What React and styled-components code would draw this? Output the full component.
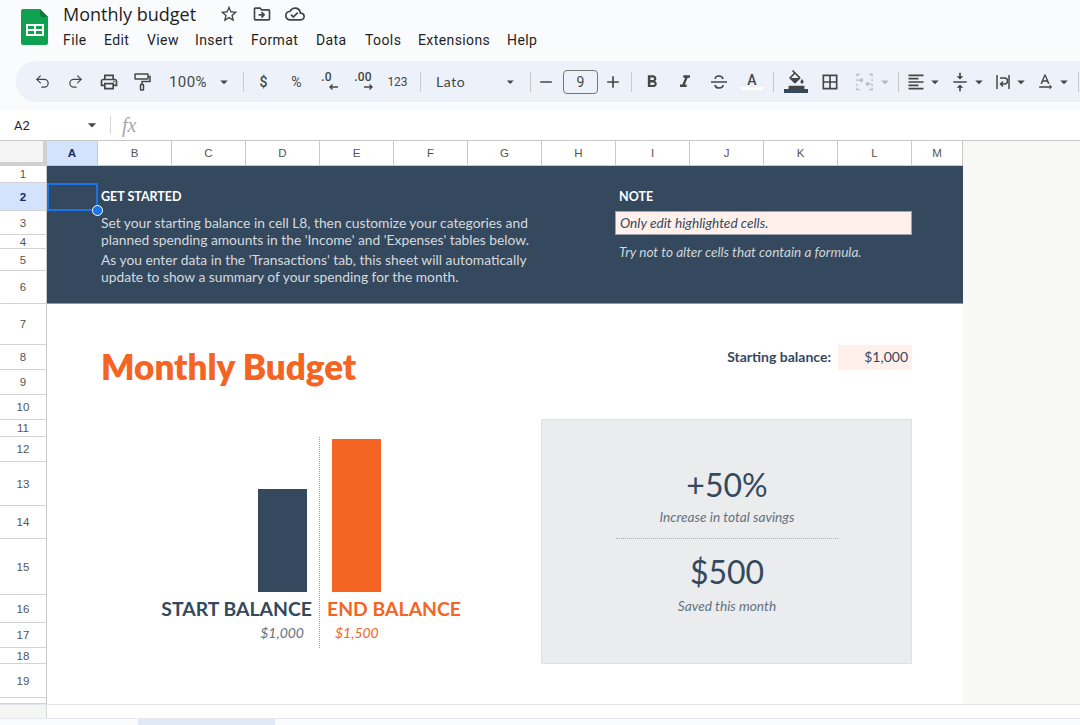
import React from "react";
import styled, { createGlobalStyle, css } from "styled-components";
import { Undo2, Redo2 } from "lucide-react";
import {
  MdStarBorder,
  MdOutlineDriveFileMove,
  MdOutlineCloudDone,
  MdOutlinePrint,
  MdArrowDropDown,
  MdAdd,
  MdRemove,
  MdFormatBold,
  MdFormatItalic,
  MdFormatColorFill,
  MdBorderAll,
  MdFormatAlignLeft,
  MdVerticalAlignCenter,
  MdTextRotationNone,
} from "react-icons/md";

const NAVY = "#34495e";
const ORANGE = "#f46524";
const PEACH = "#fff0eb";

const columns = ["A", "B", "C", "D", "E", "F", "G", "H", "I", "J", "K", "L", "M"];
const rowHeights = [17, 28, 24, 14, 22, 33, 41, 25, 25, 25, 17, 25, 44, 33, 56, 28, 25, 16, 34, 6];

const GlobalStyle = createGlobalStyle`
  html, body {
    margin: 0;
    padding: 0;
    height: 100%;
    overflow: hidden;
    background: #f9fbfd;
  }
`;

const Page = styled.div`
  width: 1080px;
  height: 725px;
  display: flex;
  flex-direction: column;
  overflow: hidden;
  background: #f9fbfd;
  font-family: Roboto, "Liberation Sans", sans-serif;
  color: #1f1f1f;
`;

const TitleBar = styled.header`
  height: 61px;
  display: flex;
  padding-left: 21px;
  gap: 15px;
  flex: none;
`;

const Logo = styled.svg`
  width: 27px;
  height: 36px;
  margin-top: 9px;
`;

const TitleBlock = styled.div`
  display: flex;
  flex-direction: column;
`;

const TitleRow = styled.div`
  display: flex;
  align-items: center;
  height: 28px;
  color: #444746;
`;

const DocName = styled.span`
  font-family: "Open Sans", sans-serif;
  font-size: 18px;
  color: #1f1f1f;
  width: 149px;
`;

const TitleIcon = styled.span`
  width: 33px;
  display: flex;
  justify-content: center;
  align-items: center;
  font-size: 20px;
`;

const MenuRow = styled.nav`
  display: flex;
  margin-top: 2px;
`;

const MenuItem = styled.span`
  font-size: 14px;
  letter-spacing: 0.4px;
  line-height: 20px;
  width: ${(p) => p.$w}px;
`;

const Toolbar = styled.div`
  height: 41px;
  margin-left: 16px;
  flex: none;
  display: flex;
  align-items: center;
  padding-left: 10px;
  background: #edf2fa;
  border-radius: 20px 0 0 20px;
  color: #444746;
  overflow: hidden;
`;

const ToolButton = styled.span`
  flex: none;
  width: ${(p) => p.$w || 33}px;
  height: 28px;
  display: flex;
  align-items: center;
  justify-content: ${(p) => p.$align || "center"};
  padding-left: ${(p) => p.$pad || 0}px;
  box-sizing: border-box;
  font-size: ${(p) => p.$size || 20}px;
  color: ${(p) => (p.$muted ? "#b5b8bb" : "#444746")};
`;

const ToolText = styled.span`
  font-size: ${(p) => p.$size || 14}px;
  font-weight: ${(p) => p.$weight || 400};
  font-family: ${(p) => (p.$lato ? "Lato, sans-serif" : "Roboto, sans-serif")};
  margin-right: ${(p) => p.$gap || 0}px;
  letter-spacing: ${(p) => p.$track || 0}px;
  white-space: nowrap;
`;

const Divider = styled.span`
  flex: none;
  width: 1px;
  height: 20px;
  background: #c7c9cc;
  margin-left: ${(p) => p.$before}px;
  margin-right: ${(p) => p.$after}px;
`;

const FontSizeBox = styled.span`
  flex: none;
  width: 35px;
  height: 24px;
  margin-left: 2px;
  box-sizing: border-box;
  border: 1px solid #747775;
  border-radius: 4px;
  display: flex;
  align-items: center;
  justify-content: center;
  font-size: 14px;
  color: #444746;
`;

const Stacked = styled.span`
  display: flex;
  flex-direction: column;
  align-items: center;
  line-height: 1;
`;

const ColorBar = styled.span`
  width: ${(p) => p.$w}px;
  height: ${(p) => p.$h}px;
  background: ${(p) => p.$color};
`;

const DecimalText = styled.span`
  font-size: 12px;
  font-weight: 500;
  line-height: 11px;
  letter-spacing: 0.2px;
  margin-right: ${(p) => p.$shift || 0}px;
`;

const CaretGap = styled.span`
  display: flex;
  margin-left: 2px;
`;

const FormulaBar = styled.div`
  margin-top: 8px;
  height: 30px;
  flex: none;
  display: flex;
  align-items: center;
  background: #fff;
  border-bottom: 1px solid #c7c7c7;
`;

const NameBox = styled.span`
  width: 68px;
  padding-left: 14px;
  font-size: 13px;
  color: #1f1f1f;
`;

const NameCaret = styled.span`
  width: 28px;
  display: flex;
  color: #444746;
  font-size: 20px;
`;

const FormulaDivider = styled.span`
  width: 1px;
  height: 18px;
  background: #d5d7da;
  margin-right: 11px;
`;

const FxLabel = styled.i`
  font-family: "Liberation Serif", serif;
  font-size: 20px;
  color: #a4a7aa;
`;

const Sheet = styled.div`
  flex: none;
  display: grid;
  grid-template-columns: 47px 51px repeat(11, 74px) 51px 117px;
  grid-template-rows: 25px ${rowHeights.map((h) => `${h}px`).join(" ")};
  background: #f8f9f7;
`;

const placed = css`
  grid-column: ${(p) => p.$col};
  grid-row: ${(p) => p.$row};
`;

const Corner = styled.div`
  grid-column: 1;
  grid-row: 1;
  box-sizing: border-box;
  background: #f5f5f5;
  border-right: 4px solid #cfd1d3;
  border-bottom: 4px solid #cfd1d3;
`;

const headCell = css`
  ${placed}
  box-sizing: border-box;
  display: flex;
  align-items: center;
  justify-content: center;
  font-family: "Liberation Sans", sans-serif;
  font-size: 11.5px;
  border-right: 1px solid #c7c7c7;
  background: ${(p) => (p.$active ? "#d3e3fd" : "#fff")};
  color: ${(p) => (p.$active ? "#0b2a6b" : "#555")};
  font-weight: ${(p) => (p.$active ? 700 : 400)};
`;

const ColumnHead = styled.div`
  ${headCell}
  border-bottom: 1px solid #c7c7c7;
`;

const RowHead = styled.div`
  ${headCell}
  border-bottom: 1px solid #d2d3d5;
`;

const Banner = styled.div`
  grid-column: 2 / 15;
  grid-row: 2 / 8;
  background: ${NAVY};
  border-bottom: 1px solid #8b98a6;
`;

const Canvas = styled.div`
  grid-column: 2 / 15;
  grid-row: 8 / 22;
  background: #fff;
`;

const Selection = styled.div`
  ${placed}
  position: relative;
  box-sizing: border-box;
  border: 2px solid #1a73e8;
`;

const FillHandle = styled.span`
  position: absolute;
  right: -7px;
  bottom: -7px;
  width: 9px;
  height: 9px;
  border-radius: 50%;
  background: #1a73e8;
  border: 1.5px solid #fff;
`;

const Cell = styled.div`
  ${placed}
  font-family: Lato, sans-serif;
  display: flex;
  align-items: center;
  white-space: nowrap;
`;

const BannerHeading = styled(Cell)`
  padding-left: 3px;
  padding-bottom: 2px;
  font-size: 12.5px;
  font-weight: 700;
  color: #fff;
`;

const BannerText = styled(Cell)`
  padding-left: 3px;
  display: block;
  align-self: ${(p) => p.$align || "center"};
  padding-top: ${(p) => p.$top || 0}px;
  font-size: 13.8px;
  line-height: 17px;
  color: #d6dadf;
`;

const NoteBox = styled(Cell)`
  box-sizing: border-box;
  margin-left: -1px;
  padding-left: 4px;
  padding-bottom: 2px;
  background: ${PEACH};
  border: 1px solid #9aa5b1;
  font-size: 13.7px;
  font-style: italic;
  color: ${NAVY};
`;

const NoteHint = styled(Cell)`
  padding-left: 3px;
  padding-bottom: 2px;
  font-size: 13.6px;
  font-style: italic;
  color: #d0d5da;
`;

const BudgetTitle = styled(Cell)`
  padding-left: 3px;
  padding-bottom: 9px;
  font-size: 35px;
  font-weight: 800;
  color: ${ORANGE};
`;

const BalanceLabel = styled(Cell)`
  justify-content: flex-end;
  padding-right: 7px;
  padding-bottom: 2px;
  font-size: 14px;
  font-weight: 700;
  color: ${NAVY};
`;

const BalanceValue = styled(Cell)`
  justify-content: flex-end;
  padding-right: 4px;
  padding-bottom: 2px;
  background: ${PEACH};
  font-size: 14px;
  color: ${NAVY};
`;

const Bar = styled.div`
  ${placed}
  align-self: end;
  width: 49px;
  height: ${(p) => p.$h}px;
  margin-bottom: 3px;
  background: ${(p) => p.$color};
  justify-self: ${(p) => (p.$left ? "end" : "start")};
  margin-right: ${(p) => (p.$left ? 13 : 0)}px;
  margin-left: ${(p) => (p.$left ? 0 : 12)}px;
`;

const CenterRule = styled.div`
  grid-column: 6;
  grid-row: 13 / 19;
  border-left: 1px dotted #9b9b9b;
  margin-left: -1px;
`;

const ChartLabel = styled(Cell)`
  justify-self: ${(p) => (p.$left ? "end" : "start")};
  margin-right: ${(p) => (p.$left ? 8 : 0)}px;
  margin-left: ${(p) => (p.$left ? 0 : 7)}px;
  padding-bottom: 2px;
  font-size: 19.4px;
  font-weight: 700;
  color: ${(p) => p.$color};
`;

const ChartValue = styled(Cell)`
  justify-self: ${(p) => (p.$left ? "end" : "start")};
  margin-right: ${(p) => (p.$left ? 16 : 0)}px;
  margin-left: ${(p) => (p.$left ? 0 : 15)}px;
  padding-bottom: 6px;
  font-size: 14px;
  font-style: italic;
  color: ${(p) => p.$color};
`;

const SavingsCard = styled.div`
  grid-column: 9 / 14;
  grid-row: 12 / 20;
  margin-top: -1px;
  margin-left: -1px;
  box-sizing: border-box;
  background: #ebecee;
  border: 1px solid #dfe1e3;
`;

const BigStat = styled(Cell)`
  justify-content: center;
  padding-top: ${(p) => p.$top || 0}px;
  font-size: 32px;
  color: ${NAVY};
`;

const StatCaption = styled(Cell)`
  justify-content: center;
  padding-bottom: ${(p) => p.$bottom || 0}px;
  font-size: 13.7px;
  font-style: italic;
  color: #65727f;
`;

const StatRule = styled.div`
  grid-column: 10 / 13;
  grid-row: 16;
  align-self: start;
  margin-top: -1px;
  border-top: 1px dotted #a9adb1;
`;

const SheetFoot = styled.div`
  height: 13px;
  flex: none;
  display: flex;
  background: #fff;
  border-top: 1px solid #e3e5e8;
`;

const FootGutter = styled.div`
  width: 46px;
  background: #f5f5f5;
  border-right: 1px solid #d5d6d8;
`;

const BottomBar = styled.div`
  flex: 1;
  display: flex;
  padding-left: 138px;
  background: #f9fbfd;
  border-top: 1px solid #e6e8eb;
`;

const SheetTab = styled.div`
  width: 137px;
  background: #e1e9f7;
`;

const SheetsLogo = () => (
  <Logo viewBox="0 0 27 36">
    <path d="M2 0h17l8 8v26a2 2 0 0 1-2 2H2a2 2 0 0 1-2-2V2a2 2 0 0 1 2-2z" fill="#0fa14f" />
    <path d="M19 0l8 8h-6a2 2 0 0 1-2-2z" fill="#0a7a3d" />
    <path d="M5 15h18v12H5zM7 17v3h6v-3zM15 17v3h6v-3zM7 22v3h6v-3zM15 22v3h6v-3z" fill="#fff" fillRule="evenodd" />
  </Logo>
);

const DecimalIcon = ({ label, dir }) => (
  <Stacked>
    <DecimalText $shift={dir === "left" ? 6 : 0}>{label}</DecimalText>
    <svg width="20" height="8" viewBox="0 0 20 8">
      {dir === "left" ? (
        <path d="M18 4h-8M12.500 1.500L10 4l2.500 2.500" fill="none" stroke="#444746" strokeWidth="1.400" />
      ) : (
        <path d="M11 4h8M16.500 1.500L19 4l-2.500 2.500" fill="none" stroke="#444746" strokeWidth="1.400" />
      )}
    </svg>
  </Stacked>
);

const PaintIcon = () => (
  <svg width="20" height="20" viewBox="0 0 20 20" fill="none" stroke="#444746" strokeWidth="1.500">
    <rect x="3" y="2" width="13" height="5" rx="0.500" />
    <path d="M16 4.500h2v5H10v3" />
    <rect x="8.500" y="12.500" width="3" height="5.500" rx="0.500" />
  </svg>
);

const StrikeIcon = () => (
  <svg width="20" height="20" viewBox="0 0 20 20" fill="none" stroke="#444746" strokeWidth="1.600">
    <path d="M14 7C13.600 4.800 12 4 10 4 7.800 4 6.200 5.200 6.200 7" />
    <path d="M6 13C6.400 15.200 8 16 10 16c2.200 0 4-1 4-3" />
    <path d="M2 10h16" />
  </svg>
);

const MergeIcon = () => (
  <svg width="20" height="20" viewBox="0 0 20 20" fill="none" stroke="#b5b8bb" strokeWidth="1.400">
    <path d="M5 2H2v2M2 7v2M2 12v2M2 16v2h3M15 2h3v2M18 7v2M18 12v2M18 16v2h-3" />
    <path d="M3 8h5M6 6l2 2-2 2M17 12h-5M14 10l-2 2 2 2" />
  </svg>
);

const WrapIcon = () => (
  <svg width="18" height="18" viewBox="0 0 18 18" fill="none" stroke="#444746" strokeWidth="1.500">
    <path d="M3 2v14M15 2v14" />
    <path d="M6 5h4.500a2.800 2.800 0 0 1 0 6H7M9 8.500L6.500 11 9 13.500" />
  </svg>
);

const Caret = ({ size = 18 }) => <MdArrowDropDown size={size} />;

export default function App() {
  return (
    <Page>
      <GlobalStyle />
      <TitleBar>
        <SheetsLogo />
        <TitleBlock>
          <TitleRow>
            <DocName>Monthly budget</DocName>
            <TitleIcon><MdStarBorder /></TitleIcon>
            <TitleIcon><MdOutlineDriveFileMove /></TitleIcon>
            <TitleIcon><MdOutlineCloudDone /></TitleIcon>
          </TitleRow>
          <MenuRow>
            <MenuItem $w={41}>File</MenuItem>
            <MenuItem $w={43}>Edit</MenuItem>
            <MenuItem $w={48}>View</MenuItem>
            <MenuItem $w={56}>Insert</MenuItem>
            <MenuItem $w={65}>Format</MenuItem>
            <MenuItem $w={49}>Data</MenuItem>
            <MenuItem $w={53}>Tools</MenuItem>
            <MenuItem $w={89}>Extensions</MenuItem>
            <MenuItem $w={40}>Help</MenuItem>
          </MenuRow>
        </TitleBlock>
      </TitleBar>

      <Toolbar>
        <ToolButton><Undo2 size={17} strokeWidth={1.7} /></ToolButton>
        <ToolButton><Redo2 size={17} strokeWidth={1.7} /></ToolButton>
        <ToolButton><MdOutlinePrint /></ToolButton>
        <ToolButton><PaintIcon /></ToolButton>
        <ToolButton $w={78} $align="flex-start" $pad={11}>
          <ToolText $size={15} $gap={8} $track={0.4}>100%</ToolText>
          <Caret />
        </ToolButton>
        <Divider $before={7} $after={3} />
        <ToolButton><ToolText $size={14} $weight={500}>$</ToolText></ToolButton>
        <ToolButton><ToolText $size={14}>%</ToolText></ToolButton>
        <ToolButton><DecimalIcon label=".0" dir="left" /></ToolButton>
        <ToolButton $w={34}><DecimalIcon label=".00" dir="right" /></ToolButton>
        <ToolButton $w={35}><ToolText $size={12}>123</ToolText></ToolButton>
        <Divider $before={5} $after={0} />
        <ToolButton $w={98} $align="flex-start" $pad={15}>
          <ToolText $lato $gap={37} $track={0.6} $size={14}>Lato</ToolText>
          <Caret />
        </ToolButton>
        <Divider $before={11} $after={0} />
        <ToolButton $w={30}><MdRemove /></ToolButton>
        <FontSizeBox>9</FontSizeBox>
        <ToolButton $w={30}><MdAdd /></ToolButton>
        <Divider $before={3} $after={3} />
        <ToolButton><MdFormatBold /></ToolButton>
        <ToolButton $w={34}><MdFormatItalic /></ToolButton>
        <ToolButton><StrikeIcon /></ToolButton>
        <ToolButton $w={34}>
          <Stacked>
            <ToolText $size={14} $weight={500}>A</ToolText>
            <ColorBar $w={22} $h={3} $color="#fff" />
          </Stacked>
        </ToolButton>
        <Divider $before={4} $after={5} />
        <ToolButton $w={34}>
          <Stacked>
            <MdFormatColorFill size={19} />
            <ColorBar $w={24} $h={4} $color={NAVY} />
          </Stacked>
        </ToolButton>
        <ToolButton $w={34}><MdBorderAll /></ToolButton>
        <ToolButton $w={47} $muted $align="flex-start" $pad={8}>
          <MergeIcon />
          <CaretGap><Caret /></CaretGap>
        </ToolButton>
        <Divider $before={4} $after={3} />
        <ToolButton $w={44} $align="flex-start" $pad={4}><MdFormatAlignLeft /><Caret /></ToolButton>
        <ToolButton $w={45} $align="flex-start" $pad={4}><MdVerticalAlignCenter /><Caret /></ToolButton>
        <ToolButton $w={42} $align="flex-start" $pad={3}><WrapIcon /><Caret /></ToolButton>
        <ToolButton $w={43} $align="flex-start" $pad={2}><MdTextRotationNone /><Caret /></ToolButton>
        <Divider $before={2} $after={0} />
      </Toolbar>

      <FormulaBar>
        <NameBox>A2</NameBox>
        <NameCaret><Caret size={20} /></NameCaret>
        <FormulaDivider />
        <FxLabel>fx</FxLabel>
      </FormulaBar>

      <Sheet>
        <Corner />
        {columns.map((c, i) => (
          <ColumnHead key={c} $col={i + 2} $row={1} $active={c === "A"}>{c}</ColumnHead>
        ))}
        {rowHeights.map((h, i) => (
          <RowHead key={i} $col={1} $row={i + 2} $active={i === 1}>{i < 19 ? i + 1 : ""}</RowHead>
        ))}

        <Banner />
        <Canvas />
        <Selection $col={2} $row={3}><FillHandle /></Selection>

        <BannerHeading $col="3 / 6" $row={3}>GET STARTED</BannerHeading>
        <BannerText $col="3 / 9" $row="4 / 6" $top={1}>
          Set your starting balance in cell L8, then customize your categories and<br />
          planned spending amounts in the 'Income' and 'Expenses' tables below.
        </BannerText>
        <BannerText $col="3 / 9" $row="6 / 8" $align="start" $top={2}>
          As you enter data in the 'Transactions' tab, this sheet will automatically<br />
          update to show a summary of your spending for the month.
        </BannerText>

        <BannerHeading $col="10 / 12" $row={3}>NOTE</BannerHeading>
        <NoteBox $col="10 / 14" $row={4}>Only edit highlighted cells.</NoteBox>
        <NoteHint $col="10 / 14" $row="5 / 7">Try not to alter cells that contain a formula.</NoteHint>

        <BudgetTitle $col="3 / 8" $row="9 / 11">Monthly Budget</BudgetTitle>
        <BalanceLabel $col="11 / 13" $row={9}>Starting balance:</BalanceLabel>
        <BalanceValue $col={13} $row={9}>$1,000</BalanceValue>

        <CenterRule />
        <Bar $col={5} $row="13 / 17" $h={103} $color={NAVY} $left />
        <Bar $col={6} $row="13 / 17" $h={153} $color={ORANGE} />
        <ChartLabel $col={5} $row={17} $color={NAVY} $left>START BALANCE</ChartLabel>
        <ChartLabel $col={6} $row={17} $color={ORANGE}>END BALANCE</ChartLabel>
        <ChartValue $col={5} $row={18} $color="#65727f" $left>$1,000</ChartValue>
        <ChartValue $col={6} $row={18} $color={ORANGE}>$1,500</ChartValue>

        <SavingsCard />
        <BigStat $col="10 / 13" $row={14}>+50%</BigStat>
        <StatCaption $col="10 / 13" $row={15} $bottom={12}>Increase in total savings</StatCaption>
        <StatRule />
        <BigStat $col="10 / 13" $row={16} $top={8}>$500</BigStat>
        <StatCaption $col="10 / 13" $row={17} $bottom={8}>Saved this month</StatCaption>
      </Sheet>

      <SheetFoot><FootGutter /></SheetFoot>
      <BottomBar><SheetTab /></BottomBar>
    </Page>
  );
}
